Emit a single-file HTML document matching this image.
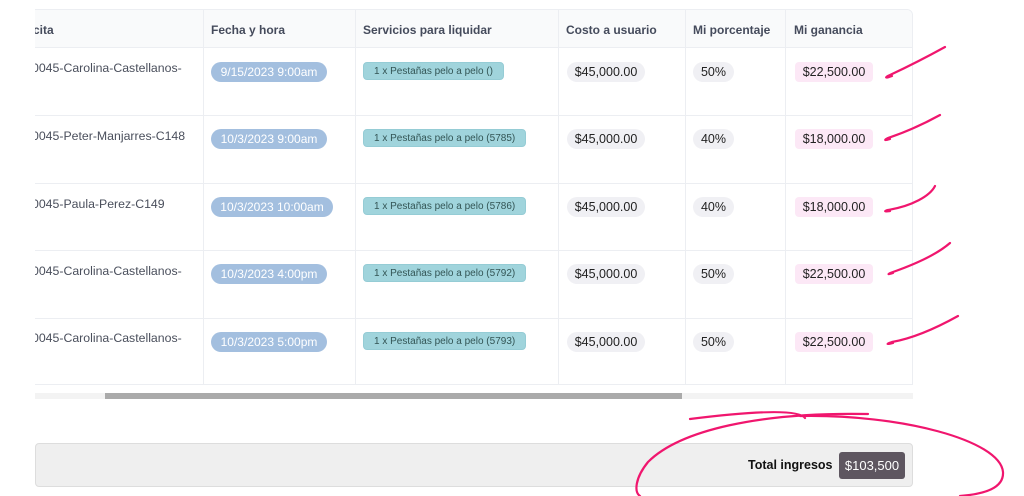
<!DOCTYPE html>
<html><head><meta charset="utf-8"><style>
*{margin:0;padding:0;box-sizing:border-box}
body{width:1024px;height:496px;background:#fff;font-family:"Liberation Sans",sans-serif;position:relative;overflow:hidden;color:#333}
.tbl{position:absolute;left:35px;top:9px;width:878px;height:376px;border:1px solid #eceef2;border-left:none;border-radius:0 6px 0 0;overflow:hidden}
.hdr{position:absolute;left:0;top:0;width:878px;height:38px;background:#f9fafb;border-bottom:1px solid #eceef2}
.vl{position:absolute;top:0;width:1px;height:376px;background:#eceef2}
.hl{position:absolute;left:0;width:878px;height:1px;background:#eceef2}
.h{position:absolute;top:13px;font-size:12px;font-weight:bold;color:#454b5c}
.c1{position:absolute;left:-3px;font-size:12.3px;color:#4a4f5c}
.pd{position:absolute;left:176px;height:20px;width:116px;border-radius:10px;background:#a3bfdf;color:#fff;font-size:12px;line-height:20px;text-align:center}
.sv{position:absolute;left:328px;height:18px;border-radius:4px;background:#a0d4dc;color:#355;font-size:10px;line-height:17px;padding:0 10px;border:1px solid #95ccd5}
.cp{position:absolute;left:532px;height:20px;width:78px;border-radius:10px;background:#f0f0f4;font-size:12.5px;line-height:20px;text-align:center;color:#222}
.pp{position:absolute;left:658px;height:20px;width:41px;border-radius:10px;background:#f0f0f4;font-size:12.5px;line-height:20px;text-align:center;color:#222}
.gp{position:absolute;left:760px;height:20px;width:78px;border-radius:4px;background:#fce8f6;font-size:12.5px;line-height:20px;text-align:center;color:#222}
</style></head><body>
<div class="tbl">
<div class="hdr"></div>
<div class="vl" style="left:168px"></div><div class="vl" style="left:320px"></div><div class="vl" style="left:523px"></div><div class="vl" style="left:650px"></div><div class="vl" style="left:750px"></div>
<div class="hl" style="top:105px"></div><div class="hl" style="top:173px"></div><div class="hl" style="top:240px"></div><div class="hl" style="top:308px"></div><div class="hl" style="top:374px"></div>
<div class="h" style="left:-2px">cita</div><div class="h" style="left:176px">Fecha y hora</div><div class="h" style="left:328px">Servicios para liquidar</div><div class="h" style="left:531px">Costo a usuario</div><div class="h" style="left:658px">Mi porcentaje</div><div class="h" style="left:759px">Mi ganancia</div>

<div class="c1" style="top:51px">0045-Carolina-Castellanos-</div>
<div class="pd" style="top:52px">9/15/2023 9:00am</div><div class="sv" style="top:52px">1 x Pestañas pelo a pelo ()</div><div class="cp" style="top:52px">$45,000.00</div><div class="pp" style="top:52px">50%</div><div class="gp" style="top:52px">$22,500.00</div>

<div class="c1" style="top:119px">0045-Peter-Manjarres-C148</div>
<div class="pd" style="top:119px">10/3/2023 9:00am</div><div class="sv" style="top:119px">1 x Pestañas pelo a pelo (5785)</div><div class="cp" style="top:119px">$45,000.00</div><div class="pp" style="top:119px">40%</div><div class="gp" style="top:119px">$18,000.00</div>

<div class="c1" style="top:187px">0045-Paula-Perez-C149</div>
<div class="pd" style="top:187px;width:122px">10/3/2023 10:00am</div><div class="sv" style="top:187px">1 x Pestañas pelo a pelo (5786)</div><div class="cp" style="top:187px">$45,000.00</div><div class="pp" style="top:187px">40%</div><div class="gp" style="top:187px">$18,000.00</div>

<div class="c1" style="top:254px">0045-Carolina-Castellanos-</div>
<div class="pd" style="top:254px">10/3/2023 4:00pm</div><div class="sv" style="top:254px">1 x Pestañas pelo a pelo (5792)</div><div class="cp" style="top:254px">$45,000.00</div><div class="pp" style="top:254px">50%</div><div class="gp" style="top:254px">$22,500.00</div>

<div class="c1" style="top:321px">0045-Carolina-Castellanos-</div>
<div class="pd" style="top:322px">10/3/2023 5:00pm</div><div class="sv" style="top:322px">1 x Pestañas pelo a pelo (5793)</div><div class="cp" style="top:322px">$45,000.00</div><div class="pp" style="top:322px">50%</div><div class="gp" style="top:322px">$22,500.00</div>
</div>
<div style="position:absolute;left:35px;top:393px;width:878px;height:6px;background:#f3f3f3"></div>
<div style="position:absolute;left:105px;top:393px;width:577px;height:6px;background:#aaa"></div>
<div style="position:absolute;left:35px;top:443px;width:878px;height:44px;background:#efefef;border:1px solid #ddd;border-radius:4px"></div>
<div style="position:absolute;left:748px;top:458px;font-size:12.5px;font-weight:bold;color:#111">Total ingresos</div>
<div style="position:absolute;left:839px;top:452px;width:66px;height:27px;background:#5e5660;border-radius:3px;color:#fff;font-size:13px;line-height:27px;text-align:center">$103,500</div>
<svg width="1024" height="496" style="position:absolute;left:0;top:0" fill="none" stroke="#f0166e" stroke-width="2.2" stroke-linecap="round">
<path d="M945 47 C925 58 905 68 890 75 C885 77 884 79 892 76"/>
<path d="M940 115 C920 126 900 134 888 138 C884 140 884 141 890 139"/>
<path d="M935 186 C930 196 912 206 888 210 C884 211 884 212 890 211"/>
<path d="M950 243 C935 256 910 266 893 272 C887 274 887 275 893 273"/>
<path d="M958 316 C940 326 915 338 892 342 C886 344 886 345 893 343"/>
<path d="M868 414 C760 412 680 430 648 462 C635 478 634 492 640 496 M805 418 C800 411 770 409 690 419 M800 416 C900 414 1000 440 1003 472 C1004 488 985 494 960 496"/>
</svg>
</body></html>
